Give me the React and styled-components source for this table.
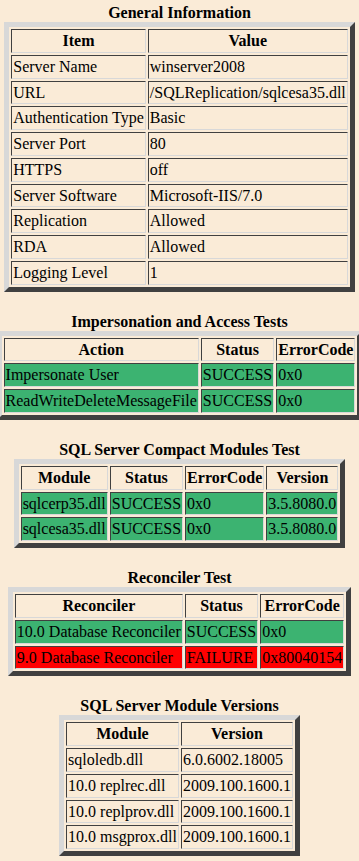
import React from 'react';
import styled, { createGlobalStyle } from 'styled-components';

const GlobalStyle = createGlobalStyle`
  html, body {
    margin: 0;
    padding: 0;
    background: #faebd7;
  }
  body {
    font-family: "Liberation Serif", "Times New Roman", serif;
    font-size: 16px;
    color: #000;
  }
`;

const Page = styled.div`
  display: flex;
  flex-direction: column;
  align-items: center;
  padding-top: 3px;
  gap: 20px;
`;

const Section = styled.section`
  display: flex;
  flex-direction: column;
  align-items: center;
`;

const Caption = styled.div`
  font-weight: bold;
  font-size: 16px;
  line-height: 19px;
  text-align: center;
`;

const Table = styled.table`
  border-collapse: separate;
  border-spacing: 2px;
  border-width: 5px;
  border-style: solid;
  border-color: #d8d8d8 #404040 #404040 #d8d8d8;
  background: #faebd7;
`;

const Cell = styled.td`
  border: 1px solid;
  border-color: #404040 #d8d8d8 #d8d8d8 #404040;
  padding: 2px 1px;
  line-height: 17.75px;
  white-space: nowrap;
  text-align: left;
  background: ${({ status }) =>
    status === 'ok' ? '#3cb371' : status === 'fail' ? '#ff0000' : 'transparent'};
`;

const Head = styled(Cell).attrs({ as: 'th' })`
  font-weight: bold;
  text-align: center;
`;

const DataTable = ({ title, columns, rows }) => (
  <Section>
    <Caption>{title}</Caption>
    <Table>
      <thead>
        <tr>
          {columns.map((c) => (
            <Head key={c}>{c}</Head>
          ))}
        </tr>
      </thead>
      <tbody>
        {rows.map((r, i) => (
          <tr key={i}>
            {r.cells.map((v, j) => (
              <Cell key={j} status={r.status}>
                {v}
              </Cell>
            ))}
          </tr>
        ))}
      </tbody>
    </Table>
  </Section>
);

const general = [
  ['Server Name', 'winserver2008'],
  ['URL', '/SQLReplication/sqlcesa35.dll'],
  ['Authentication Type', 'Basic'],
  ['Server Port', '80'],
  ['HTTPS', 'off'],
  ['Server Software', 'Microsoft-IIS/7.0'],
  ['Replication', 'Allowed'],
  ['RDA', 'Allowed'],
  ['Logging Level', '1'],
].map((cells) => ({ cells }));

const access = [
  { status: 'ok', cells: ['Impersonate User', 'SUCCESS', '0x0'] },
  { status: 'ok', cells: ['ReadWriteDeleteMessageFile', 'SUCCESS', '0x0'] },
];

const modules = [
  { status: 'ok', cells: ['sqlcerp35.dll', 'SUCCESS', '0x0', '3.5.8080.0'] },
  { status: 'ok', cells: ['sqlcesa35.dll', 'SUCCESS', '0x0', '3.5.8080.0'] },
];

const reconcilers = [
  { status: 'ok', cells: ['10.0 Database Reconciler', 'SUCCESS', '0x0'] },
  { status: 'fail', cells: ['9.0 Database Reconciler', 'FAILURE', '0x80040154'] },
];

const versions = [
  ['sqloledb.dll', '6.0.6002.18005'],
  ['10.0 replrec.dll', '2009.100.1600.1'],
  ['10.0 replprov.dll', '2009.100.1600.1'],
  ['10.0 msgprox.dll', '2009.100.1600.1'],
].map((cells) => ({ cells }));

export default function App() {
  return (
    <>
      <GlobalStyle />
      <Page>
        <DataTable title="General Information" columns={['Item', 'Value']} rows={general} />
        <DataTable
          title="Impersonation and Access Tests"
          columns={['Action', 'Status', 'ErrorCode']}
          rows={access}
        />
        <DataTable
          title="SQL Server Compact Modules Test"
          columns={['Module', 'Status', 'ErrorCode', 'Version']}
          rows={modules}
        />
        <DataTable
          title="Reconciler Test"
          columns={['Reconciler', 'Status', 'ErrorCode']}
          rows={reconcilers}
        />
        <DataTable
          title="SQL Server Module Versions"
          columns={['Module', 'Version']}
          rows={versions}
        />
      </Page>
    </>
  );
}
